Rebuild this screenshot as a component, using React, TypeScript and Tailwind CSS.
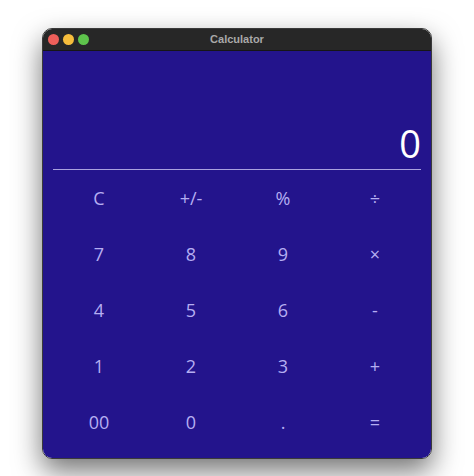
import React from "react"

const keys = ["C", "+/-", "%", "÷", "7", "8", "9", "×", "4", "5", "6", "-", "1", "2", "3", "+", "00", "0", ".", "="]

export default function App() {
  return (
    <div className="w-[474px] h-[476px] bg-white overflow-hidden pt-[28px] pl-[42px]">
      <div className="w-[390px] h-[431px] rounded-[10px] overflow-hidden flex flex-col shadow-[0_12px_28px_rgba(0,0,0,0.55)] border border-[#3a3a3a]">
        <div className="h-[22px] bg-[#272727] flex items-center relative border-b border-[#161616]">
          <div className="flex gap-[4px] pl-[5px]">
            <span className="w-[11px] h-[11px] rounded-full bg-[#ee5f5a]" />
            <span className="w-[11px] h-[11px] rounded-full bg-[#f6bd3c]" />
            <span className="w-[11px] h-[11px] rounded-full bg-[#5ec34c]" />
          </div>
          <div className="absolute inset-0 flex items-center justify-center text-[11px] font-bold text-[#a9a9a9] font-['Liberation_Sans',sans-serif]">
            Calculator
          </div>
        </div>
        <div className="flex-1 bg-[#23148c] flex flex-col px-[10px] font-['Open_Sans',sans-serif]">
          <div className="h-[119px] flex items-end justify-end pb-[7px] border-b border-[#a9a2de]">
            <span className="text-[38px] leading-none text-white">0</span>
          </div>
          <div className="grid grid-cols-4 grid-rows-5 h-[280px]">
            {keys.map((k, i) => (
              <div key={i} className="flex items-center justify-center text-[18px] text-[#b5aef2]">
                {k}
              </div>
            ))}
          </div>
        </div>
      </div>
    </div>
  )
}
